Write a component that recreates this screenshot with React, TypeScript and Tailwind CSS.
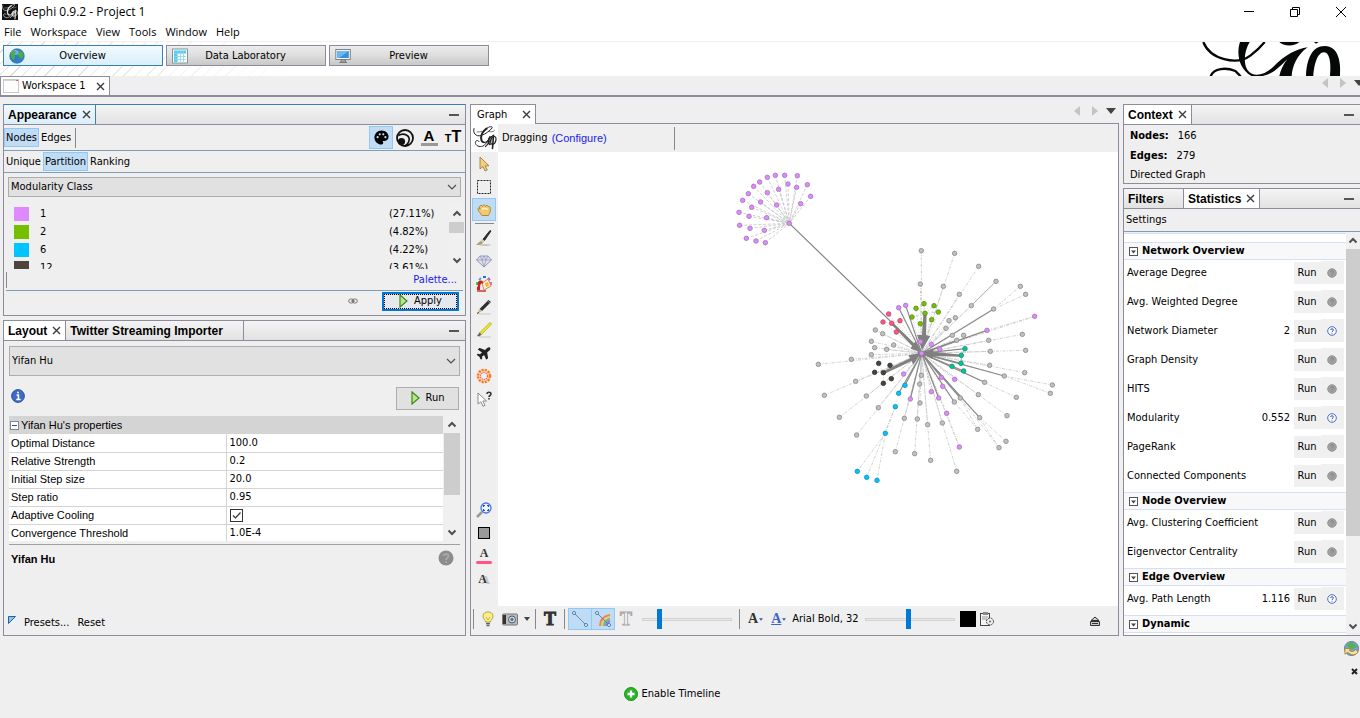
import React from "react";
import { FaPlane } from "react-icons/fa";
import { MdPalette } from "react-icons/md";

type Point = [number, number];

const UI = "font-['DejaVu_Sans_Condensed','DejaVu_Sans','Noto_Sans',sans-serif]";
const ARIAL = "font-['Liberation_Sans',sans-serif]";
const SEGOE = "font-['Open_Sans','Noto_Sans',sans-serif]";

/* ---------- graph data ---------- */

const hub: Point = [365, 340];

const smallCluster: Point[] = [
  [142, 52], [166, 46], [194, 46], [232, 47], [262, 74], [272, 109], [242, 131],
  [204, 72], [230, 82], [176, 88], [142, 98], [119, 66], [101, 79], [85, 101],
  [68, 121], [95, 142], [122, 126], [170, 135], [140, 173], [57, 157], [87, 169],
  [59, 196], [90, 205], [133, 211], [79, 235], [108, 243], [136, 248],
];

const grays: Point[] = [
  [364, 32], [464, 40], [536, 79], [588, 124], [661, 139], [677, 163], [361, 132],
  [430, 139], [478, 163], [514, 197], [581, 207], [466, 233], [447, 242], [438, 265],
  [491, 286], [457, 286], [470, 301], [566, 301], [667, 283], [677, 331], [571, 334],
  [569, 376], [674, 398], [613, 408], [757, 435], [751, 460], [554, 427], [535, 464],
  [649, 472], [621, 527], [481, 474], [463, 486], [539, 533], [533, 568], [618, 604],
  [597, 623], [427, 549], [470, 694], [383, 554], [392, 661], [352, 537], [344, 641],
  [313, 535], [286, 635], [235, 503], [170, 585], [199, 468], [118, 532], [167, 424],
  [73, 466], [154, 358], [55, 373], [214, 344], [214, 304], [224, 323], [226, 270],
  [248, 281], [260, 328], [281, 315], [364, 406], [359, 432], [360, 489],
];

const purples: Point[] = [
  [296, 203], [317, 196], [361, 305], [394, 313], [419, 327], [561, 271], [704, 229],
  [311, 402], [424, 412], [464, 418], [428, 439], [394, 455], [416, 474], [331, 477],
  [440, 520], [478, 621], [365, 340],
];
const greens: Point[] = [
  [372, 191], [402, 197], [348, 205], [415, 216], [375, 220], [336, 231], [395, 239], [361, 251],
];
const pinks: Point[] = [[266, 222], [249, 246], [300, 242], [275, 250], [289, 276]];
const darks: Point[] = [[236, 370], [270, 376], [224, 397], [250, 398], [274, 416], [250, 430]];
const blues: Point[] = [
  [315, 436], [296, 460], [286, 500], [256, 580], [172, 694], [200, 712], [231, 721],
];
const teals: Point[] = [[495, 326], [484, 346], [483, 370], [456, 379], [491, 393]];

const strong: Point[] = [
  [581, 207], [561, 271], [495, 326], [484, 346], [483, 370], [613, 408], [554, 427],
  [481, 474], [539, 533], [463, 486], [416, 474], [331, 477], [296, 460], [315, 436],
  [296, 203], [317, 196], [491, 393], [424, 412], [470, 301],
];

const branches: [Point, Point][] = [
  [[581, 207], [661, 139]], [[581, 207], [677, 163]], [[561, 271], [704, 229]],
  [[613, 408], [757, 435]], [[613, 408], [751, 460]], [[481, 474], [533, 568]],
  [[463, 486], [533, 568]], [[539, 533], [618, 604]], [[539, 533], [597, 623]],
  [[481, 474], [597, 623]], [[256, 580], [172, 694]], [[256, 580], [231, 721]],
  [[286, 500], [200, 712]], [[286, 500], [256, 580]], [[440, 520], [478, 621]],
  [[375, 220], [372, 191]], [[375, 220], [402, 197]], [[375, 220], [336, 231]],
  [[375, 220], [348, 205]], [[375, 220], [415, 216]], [[250, 398], [236, 370]],
  [[250, 398], [224, 397]], [[250, 398], [250, 430]], [[250, 398], [270, 376]],
  [[250, 398], [274, 416]], [[275, 250], [266, 222]], [[275, 250], [249, 246]],
  [[275, 250], [300, 242]],
];

// leaves that hang off another node instead of the hub
const skipped = ["661,139", "677,163", "757,435", "751,460", "533,568", "618,604", "597,623"];

const Dots = ({ points, fill, stroke }: { points: Point[]; fill: string; stroke: string }) => (
  <g fill={fill} stroke={stroke} strokeWidth="2.5">
    {points.map(([x, y]) => (
      <circle key={`${x}-${y}`} cx={x} cy={y} r="6.8" />
    ))}
  </g>
);

const GraphCanvas = () => (
  <svg viewBox="0 0 1860 1362" className="h-full w-full" role="img" aria-label="Graph">
    <g transform="translate(666 24)">
      <g stroke="#c6c6c6" strokeWidth="2.5" strokeDasharray="9 5">
        {smallCluster.map(([x, y]) => (
          <line key={`${x}-${y}`} x1={x} y1={y} x2="208" y2="190" />
        ))}
      </g>
      <line x1="208" y1="190" x2="590" y2="560" stroke="#808080" strokeWidth="3.5" />
      <Dots points={[...smallCluster, [208, 190]]} fill="#df89ff" stroke="#a677b8" />
    </g>
    <g transform="translate(906 264)">
      <g stroke="#c8c8c8" strokeWidth="2.5" strokeDasharray="9 4 3 4">
        {[...grays, ...purples]
          .filter((p) => !skipped.includes(p.join(",")))
          .map(([x, y]) => (
            <line key={`${x}-${y}`} x1={x} y1={y} x2={hub[0]} y2={hub[1]} />
          ))}
        {[...greens, ...pinks].map(([x, y]) => (
          <line key={`${x}-${y}`} x1={x} y1={y} x2={hub[0]} y2={hub[1]} strokeDasharray="3 5" />
        ))}
        {branches.map(([a, b]) => (
          <line key={`${a}-${b}`} x1={a[0]} y1={a[1]} x2={b[0]} y2={b[1]} />
        ))}
      </g>
      <path d="M588 124L514 197M484 370V346L495 326" stroke="#b0b0b0" strokeWidth="3" fill="none" />
      <g stroke="#8a8a8a" strokeWidth="3.5">
        {strong.map(([x, y]) => (
          <line key={`${x}-${y}`} x1={x} y1={y} x2={hub[0]} y2={hub[1]} />
        ))}
      </g>
      <g fill="#808080">
        <path d="M370 222H380L378 286L391 288L366 330L351 284L366 285Z" />
        <path d="M249 394L330 355L325 346L362 339L340 374L335 363L251 403Z" />
        <path d="M482 350L400 348L398 357L366 341L400 326L401 335L484 344Z" />
        <path d="M273 252L279 249L341 310L348 304L362 336L332 326L336 317Z" />
        <path d="M352 334L378 334L374 350H356Z" />
      </g>
      <Dots points={grays} fill="#c0c0c0" stroke="#8c8c8c" />
      <Dots points={greens} fill="#74c000" stroke="#5a9010" />
      <Dots points={pinks} fill="#ff5584" stroke="#bd4768" />
      <Dots points={darks} fill="#4a423c" stroke="#38322e" />
      <Dots points={blues} fill="#00c4ff" stroke="#1192ba" />
      <Dots points={teals} fill="#00c795" stroke="#119273" />
      <Dots points={purples} fill="#df89ff" stroke="#a677b8" />
    </g>
  </svg>
);

/* ---------- icons ---------- */

const Icon = ({
  children,
  box = "0 0 16 16",
  className = "h-4 w-4",
}: {
  children: React.ReactNode;
  box?: string;
  className?: string;
}) => (
  <svg viewBox={box} className={`shrink-0 ${className}`} fill="none" aria-hidden="true">
    {children}
  </svg>
);

const CloseIcon = () => (
  <Icon box="0 0 9 9" className="h-[9px] w-[9px]">
    <path d="M1 1L8 8M8 1L1 8" stroke="#3c3c3c" strokeWidth="1.4" />
  </Icon>
);

const Chevron = ({ up = false }: { up?: boolean }) => (
  <Icon box="0 0 10 7" className="h-[7px] w-[10px]">
    <path d={up ? "M1.5 5.500L5 2L8.500 5.500" : "M1.5 1.500L5 5L8.500 1.500"} stroke="#505050" strokeWidth="2" />
  </Icon>
);

const GlobeIcon = () => (
  <Icon>
    <circle cx="8" cy="8" r="7.300" fill="#2e7fc4" stroke="#3a6c9c" strokeWidth=".6" />
    <ellipse cx="6" cy="4.500" rx="4" ry="2.500" fill="#8cc8f0" opacity=".7" />
    <path d="M2 5C4 2 6 3 7 4L5 7L6 9L5 12C3 11 1 8 2 5ZM9 2L13 4L14.500 7L13 11L10 9L9 6L11 5Z" fill="#4fae3c" />
  </Icon>
);

const TableIcon = () => (
  <Icon>
    <rect x=".5" y="1" width="15" height="14" fill="#fdfdfd" stroke="#7c9a9c" />
    <path d="M2 2.500H14V5H2ZM2 5H5V14H2Z" fill="#50cdf5" />
    <path d="M2 5.500H14M2 8.500H14M2 11.500H14M5.500 3V14M8.500 3V14M11.500 3V14" stroke="#8ed4ec" strokeWidth=".8" />
  </Icon>
);

const MonitorIcon = () => (
  <Icon>
    <rect x=".8" y="1.500" width="14.500" height="10" fill="#f4f4f4" stroke="#828282" />
    <rect x="2.300" y="3" width="11.500" height="7" fill="#3292dc" />
    <path d="M2.300 3H13.800L4 10H2.300Z" fill="#6cb8f0" />
    <path d="M6 12H10.500V14H6ZM4.500 14.500H12" stroke="#777" fill="#ccc" />
  </Icon>
);

const ScriptLogo = ({ stroke, className }: { stroke: string; className: string }) => (
  <Icon box="0 0 24 24" className={className}>
    <g stroke={stroke} strokeLinecap="round">
      <path d="M1 2.500C-.5 7 3 11 8 9.500C13 8 17 4.500 19 2C20 .5 17.500 .3 15.500 1.300C11 3.500 8 8 8 12C8 15.500 10 17.500 13 16C16 14.500 18 11 20 9.500" strokeWidth="1" />
      <path d="M13.500 2.500C9.500 5.500 8 9 8.200 12.500C8.400 15 9.500 16.300 11 16.300" strokeWidth="1.800" />
      <path d="M20 9.500C15.500 11 14.500 17 11 19.500C8 21.500 3.500 20.500 2.500 17.500C1.800 14.500 5 13.500 6 15.500" strokeWidth="1" />
      <path d="M17 11C14.500 14.500 15 18 17 18.300" strokeWidth="1.800" />
      <path d="M12.500 20.500C15.500 18.500 18.500 10.500 21.500 10.500C24 10.500 23.500 17.500 19.500 18.300C16.500 18.500 18 13 19 11.500" strokeWidth="1.200" />
      <path d="M20.500 9.500L19.500 22.500" strokeWidth="1.600" />
      <path d="M4 6C7 6 12 5.500 14.500 3M16 5.500C18 6.500 20.500 5.500 21.500 4.500" strokeWidth=".6" />
    </g>
  </Icon>
);

const BigLogo = () => (
  <Icon box="276 126 474 102" className="h-[34px] w-[158px]">
    <path d="M280 126C300 178 380 198 422 166Q448 146 464 126M302 229C310 203 350 202 376 213L392 229" stroke="#060808" strokeWidth="7" />
    <path d="M390 126H419C402 155 400 190 412 209C428 234 464 226 490 200C525 165 560 146 593 142C560 165 547 200 545 228H508C512 210 520 193 532 178C505 203 490 222 458 228H424C383 205 380 155 390 126Z" fill="#060808" />
    <path d="M588 228C590 178 605 138 645 138C682 138 694 180 690 228H660C664 190 659 157 642 157C622 157 612 195 610 228Z" fill="#060808" />
    <path d="M508 126C520 140 555 140 568 126ZM612 126L618 131L626 126Z" fill="#060808" />
  </Icon>
);

const PlayIcon = () => (
  <Icon box="0 0 9 14" className="h-[14px] w-[9px]">
    <path d="M1 1L8 7L1 13Z" fill="#b9e68c" stroke="#3a8a1c" strokeWidth="1.200" />
  </Icon>
);

const HelpDot = ({ active = false }: { active?: boolean }) => (
  <Icon box="0 0 10 10" className="h-[10px] w-[10px]">
    <circle cx="5" cy="5" r="4.300" fill={active ? "#fff" : "#a0a0a0"} stroke={active ? "#4a6cc8" : "#989898"} />
    <path d="M3.600 4C3.600 2.300 6.400 2.300 6.400 4C6.400 5 5 4.900 5 6M5 6.800V7.700" stroke={active ? "#3458b8" : "#848484"} strokeWidth="1" />
  </Icon>
);

const ArrowPointer = () => (
  <Icon>
    <path d="M4 1V13L7 10.500L9 15L11.300 14L9.200 9.800H13Z" fill="#f5cf7c" stroke="#a07c3c" strokeWidth=".9" />
  </Icon>
);
const SelectBox = () => (
  <Icon>
    <rect x="1.500" y="1.500" width="13" height="13" stroke="#222" strokeDasharray="2 1" />
  </Icon>
);
const HandIcon = () => (
  <Icon>
    <path d="M2 7.500C1.500 5.500 3.500 5.500 4 7.500L3.500 4.500C4 3 6 3 6.500 4.500C7 2.500 9 2.500 9.500 4.500C10 3 12 3 12.300 4.800C13.500 4 14.700 5 14.300 6.500V9C14 11 13 12 12.500 13.500H6C5 11.500 2.500 10 2 7.500Z" fill="#f3c96f" stroke="#b48732" />
    <path d="M5.500 7.500C7 6.500 10 6.500 12 7.500" stroke="#fff0c0" strokeWidth="1.500" />
  </Icon>
);
const BrushIcon = () => (
  <Icon>
    <ellipse cx="9" cy="15" rx="6" ry=".7" fill="#bbb" />
    <path d="M14 .5L15 1L8.500 10.500L7 9.300Z" fill="#2b2b2b" stroke="#2b2b2b" />
    <path d="M6 9L8.500 11L7 13L4.500 11Z" fill="#c8c8c8" />
    <path d="M5 11L7 13C5 15 3 15 0 15C2 14 2 12 5 11Z" fill="#b5a15e" />
  </Icon>
);
const DiamondIcon = () => (
  <Icon>
    <path d="M4 3H12L15.500 7L8 14L.5 7Z" fill="#dfdfee" stroke="#9898b4" />
    <path d="M.5 7H15.500M4 3L6 7L8 14L10 7L12 3M6 7L8 3L10 7" stroke="#9090b8" strokeWidth=".7" />
  </Icon>
);
const PainterIcon = () => (
  <Icon>
    <path d="M1 9L1 6" stroke="#50c850" strokeWidth="2" />
    <path d="M3 4L5 2" stroke="#40a8e8" strokeWidth="2" />
    <path d="M7 1H10" stroke="#3868e0" strokeWidth="2" />
    <path d="M12 2L14 4" stroke="#9a5ce0" strokeWidth="2" />
    <path d="M15 6V9" stroke="#e868b8" strokeWidth="2" />
    <path d="M6 7L12 3L15 10L8 14Z" fill="#fff2dc" stroke="#d58c4c" />
    <path d="M9 7L12 6L13 10L10 11Z" fill="#f2b52a" />
    <path d="M2 6C5 3 8 5 7 8C5 6 4 9 4 14H1V11C3 11 1 8 2 6Z" fill="#c62424" />
    <path d="M1 15H10" stroke="#d03838" strokeWidth="1.500" />
  </Icon>
);
const PencilIcon = () => (
  <Icon>
    <path d="M3 15H15" stroke="#c8c8c8" />
    <path d="M12.500 1L15 3L6 12L3.500 10Z" fill="#2e2e2e" />
    <path d="M11.500 2L14 4" stroke="#888" />
    <path d="M3.500 10L6 12L1 15Z" fill="#d5b47c" />
    <path d="M1 15L2 13L3 14Z" fill="#111" />
  </Icon>
);
const HighlighterIcon = () => (
  <Icon>
    <path d="M4 15H15" stroke="#c8c8c8" />
    <path d="M14 .5L15.500 2L5.500 12.500L3.500 11Z" fill="#f2ee1c" stroke="#a8a424" strokeWidth=".8" />
    <path d="M3.500 10.500L5.500 12.500L3.500 14.500L1 14Z" fill="#666" />
  </Icon>
);
const SunIcon = () => (
  <Icon>
    <circle cx="8" cy="8" r="6" stroke="#ff7820" strokeWidth="2.600" strokeDasharray="2.200 .94" />
    <circle cx="8" cy="8" r="3.500" stroke="#ff5030" strokeDasharray="1.300 .9" strokeWidth="1.200" />
  </Icon>
);
const CursorHelpIcon = () => (
  <Icon>
    <path d="M2 2V13L4.800 10.800L7 15.300L9 14.300L6.800 10H10.500Z" fill="#fff" stroke="#8a8a8a" />
    <path d="M11 3C11 .6 15 .6 15 3C15 4.500 13 4.500 13 6M13 7V8.500" stroke="#333" strokeWidth="1.600" />
  </Icon>
);
const ZoomIcon = () => (
  <Icon>
    <path d="M1 15L6 10" stroke="#999" strokeWidth="2.500" />
    <circle cx="10" cy="6" r="5" fill="#eef4ff" stroke="#5078dc" strokeWidth="1.300" />
    <path d="M7.500 5V3.500H9M11 3.500H12.500V5M12.500 7V8.500H11M9 8.500H7.500V7" stroke="#2a50c0" strokeWidth="1.200" />
  </Icon>
);
const SquareIcon = () => <span className="h-3 w-3 border border-black bg-[#999]" />;

const upperTools = [
  { name: "Direct selection", icon: <ArrowPointer /> },
  { name: "Rectangle selection", icon: <SelectBox /> },
  { name: "Drag", icon: <HandIcon />, active: true },
];
const lowerTools = [
  { name: "Painter", icon: <BrushIcon /> },
  { name: "Sizer", icon: <DiamondIcon /> },
  { name: "Brush", icon: <PainterIcon /> },
  { name: "Node pencil", icon: <PencilIcon /> },
  { name: "Edge pencil", icon: <HighlighterIcon /> },
  { name: "Shortest path", icon: <FaPlane className="h-[15px] w-[15px] -rotate-40 text-[#222]" /> },
  { name: "Heat map", icon: <SunIcon /> },
  { name: "Edit", icon: <CursorHelpIcon /> },
];
const viewTools = [
  { name: "Center on graph", icon: <ZoomIcon /> },
  { name: "Reset colors", icon: <SquareIcon /> },
  {
    name: "Reset label colors",
    icon: (
      <span className="flex flex-col items-center font-['Liberation_Serif',serif] text-[12px] leading-[11px] font-bold text-[#333]">
        A<i className="mt-[2px] h-[3px] w-4 rounded-sm bg-[#ff5584]" />
      </span>
    ),
  },
  {
    name: "Reset label visible",
    icon: (
      <span className="pr-[3px] font-['Liberation_Serif',serif] text-[12px] font-bold text-[#333] [text-shadow:3px_1px_0_#c4c4c4]">
        A
      </span>
    ),
  },
];

const ToolButton = ({ name, icon, active }: { name: string; icon: React.ReactNode; active?: boolean }) => (
  <button
    aria-label={name}
    className={`flex h-[23px] w-6 items-center justify-center ${
      active ? "border border-[#90c8f6] bg-[#bfdcf4]" : ""
    }`}
  >
    {icon}
  </button>
);

/* ---------- shared pieces ---------- */

const Tab = ({
  label,
  active,
  focused,
  closable = true,
  className = "",
}: {
  label: string;
  active?: boolean;
  focused?: boolean;
  closable?: boolean;
  className?: string;
}) => (
  <div
    className={`flex items-center gap-[5px] border-r px-1 ${
      focused
        ? "border-[#3c7fb1] bg-linear-to-b from-[#f0f8fe] to-[#dceefb]"
        : active
          ? "border-[#8c8c9a] bg-white"
          : "border-[#8c8c9a]"
    } ${className}`}
  >
    <button className="whitespace-nowrap">{label}</button>
    {closable && (
      <button aria-label={`Close ${label}`}>
        <CloseIcon />
      </button>
    )}
  </div>
);

const PanelHeader = ({ children }: { children: React.ReactNode }) => (
  <div
    className={`flex h-5 shrink-0 border-b border-[#8c8c9a] bg-linear-to-b from-[#f4f4f4] to-[#e2e2e2] text-[12px] font-bold ${ARIAL}`}
  >
    {children}
    <button aria-label="Minimize" className="ml-auto flex w-[22px] items-center justify-center">
      <i className="h-[2px] w-[10px] bg-[#555]" />
    </button>
  </div>
);

const Panel = ({ children, className = "" }: { children: React.ReactNode; className?: string }) => (
  <section className={`flex min-h-0 flex-col border border-[#8c8c9a] bg-[#efefef] ${className}`}>{children}</section>
);

const Scrollbar = ({ thumb, className = "" }: { thumb: string; className?: string }) => (
  <div className={`flex shrink-0 flex-col items-center bg-[#f0f0f0] ${className}`} aria-hidden="true">
    <div className="flex h-[17px] items-center">
      <Chevron up />
    </div>
    <div className={`w-full bg-[#cdcdcd] ${thumb}`} />
    <div className="mt-auto flex h-[17px] items-center">
      <Chevron />
    </div>
  </div>
);

const Combo = ({ label, value, className }: { label: string; value: string; className: string }) => (
  <div className={`relative shrink-0 ${className}`}>
    <select aria-label={label} className="h-full w-full appearance-none border border-[#adadad] bg-[#e1e1e1] px-[2px]">
      <option>{value}</option>
    </select>
    <span className="pointer-events-none absolute inset-y-0 right-1 flex items-center">
      <Icon box="0 0 10 6" className="h-[6px] w-[10px]">
        <path d="M1 1L5 5L9 1" stroke="#505050" strokeWidth="1.200" />
      </Icon>
    </span>
  </div>
);

/* ---------- top ---------- */

const TitleBar = () => (
  <header className={`shrink-0 bg-white text-[11px] ${SEGOE}`}>
    <div className="flex h-[23px] items-center pl-[2px]">
      <span className="flex h-4 w-4 items-center justify-center bg-[#111]">
        <ScriptLogo stroke="#ddd" className="h-4 w-4" />
      </span>
      <h1 className="ml-[5px] text-[12px]">Gephi 0.9.2 - Project 1</h1>
      <div className="-mr-1 ml-auto flex">
        <button aria-label="Minimize window" className="flex h-5 w-[46px] items-center justify-center">
          <i className="h-px w-[10px] bg-black" />
        </button>
        <button aria-label="Restore window" className="flex h-5 w-[46px] items-center justify-center">
          <Icon box="0 0 10 10" className="h-[10px] w-[10px]">
            <path d="M.5 2.500H7.500V9.500H.5ZM2.500 2V.5H9.500V7.500H8" stroke="#000" />
          </Icon>
        </button>
        <button aria-label="Close window" className="flex h-5 w-[46px] items-center justify-center">
          <Icon box="0 0 10 10" className="h-[10px] w-[10px]">
            <path d="M0 0L10 10M10 0L0 10" stroke="#000" />
          </Icon>
        </button>
      </div>
    </div>
    <nav className="flex h-[19px] items-center gap-[9px] border-b border-[#f0f0f0] pl-1">
      {["File", "Workspace", "View", "Tools", "Window", "Help"].map((item) => (
        <button key={item}>{item}</button>
      ))}
    </nav>
  </header>
);

const perspectives = [
  { name: "Overview", icon: <GlobeIcon />, active: true },
  { name: "Data Laboratory", icon: <TableIcon /> },
  { name: "Preview", icon: <MonitorIcon /> },
];

const Perspectives = () => (
  <div className="flex h-[34px] shrink-0 justify-between bg-white bg-[linear-gradient(90deg,transparent,#fff_300px),repeating-linear-gradient(135deg,#fff_0,#fff_7px,#dcdcdc_7px,#dcdcdc_8px)]">
    <div className="flex items-start gap-[3px] pt-[3px] pl-[3px]">
      {perspectives.map((p) => (
        <button
          key={p.name}
          className={`flex h-[21px] w-40 items-center border pr-[22px] pl-[5px] ${
            p.active
              ? "border-[#3c7fb1] bg-linear-to-b from-[#f2fafe] to-[#d8effb]"
              : "border-[#8c8c9a] bg-linear-to-b from-[#ececec] via-[#dedede] via-50% to-[#c8c8c8]"
          }`}
        >
          {p.icon}
          <span className="flex-1">{p.name}</span>
        </button>
      ))}
    </div>
    <BigLogo />
  </div>
);

const TabArrows = ({ className = "" }: { className?: string }) => (
  <div className={`flex items-center gap-3 ${className}`}>
    <Icon box="0 0 6 10" className="h-[10px] w-[6px]">
      <path d="M6 0V10L0 5Z" fill="#c4c4c4" />
    </Icon>
    <Icon box="0 0 6 10" className="h-[10px] w-[6px]">
      <path d="M0 0V10L6 5Z" fill="#c4c4c4" />
    </Icon>
    <Icon box="0 0 10 6" className="-ml-1 h-[6px] w-[10px]">
      <path d="M0 0H10L5 6Z" fill="#444" />
    </Icon>
  </div>
);

const WorkspaceTabs = () => (
  <div className="flex h-[21px] shrink-0 items-stretch justify-between overflow-hidden border-b-2 border-[#8c8c9a]">
    <div className="flex w-[110px] items-center border border-b-0 border-[#8c8c9a] bg-white pl-[2px]">
      <Icon>
        <rect x=".5" y="1.500" width="15" height="13" fill="#fdfdfd" stroke="#c8c8c8" />
        <path d="M1 2.500H15" stroke="#d4d4d4" />
        <path d="M13 2.500H15" stroke="#e06040" />
      </Icon>
      <button className="ml-[3px]">Workspace 1</button>
      <button aria-label="Close Workspace 1" className="mr-1 ml-auto">
        <CloseIcon />
      </button>
    </div>
    <TabArrows className="-mr-1 pb-[5px]" />
  </div>
);

/* ---------- left ---------- */

const classes = [
  { id: "1", share: "(27.11%)", swatch: "bg-[#df89ff]" },
  { id: "2", share: "(4.82%)", swatch: "bg-[#74c000]" },
  { id: "6", share: "(4.22%)", swatch: "bg-[#00c4ff]" },
  { id: "12", share: "(3.61%)", swatch: "bg-[#4c463e]" },
];

const pressed = "border border-[#90c8f6] bg-[#bfdcf4]";

const Appearance = () => (
  <Panel className="h-[212px] shrink-0 border-t-[#3c7fb1]">
    <PanelHeader>
      <Tab label="Appearance" focused />
    </PanelHeader>
    <div className="flex h-[26px] shrink-0 items-center border-b border-[#7e9db9]">
      <button className={`h-[19px] px-px ${pressed}`}>Nodes</button>
      <button className="h-[19px] px-[2px]">Edges</button>
      <i className="ml-[2px] h-5 w-px bg-[#888]" />
      <div className="ml-auto flex">
        <button aria-label="Color" className={`flex h-[23px] w-6 items-center justify-center ${pressed}`}>
          <MdPalette className="h-[17px] w-[17px]" />
        </button>
        <button aria-label="Size" className="flex h-[23px] w-6 items-center justify-center">
          <Icon box="0 0 18 18" className="h-[18px] w-[18px]">
            <circle cx="9" cy="9" r="8" stroke="#111" strokeWidth="1.800" />
            <path d="M2.500 6.500C8 3 14.500 7 13 12C12.500 14 11 16 9 17" stroke="#111" strokeWidth="1.600" />
            <circle cx="5.500" cy="12.500" r="3.600" fill="#111" />
          </Icon>
        </button>
        <button
          aria-label="Label color"
          className={`flex h-[23px] w-6 flex-col items-center justify-center text-[15px] leading-[13px] font-bold ${ARIAL}`}
        >
          A<i className="mt-px h-[3px] w-[17px] bg-[#999]" />
        </button>
        <button aria-label="Label size" className={`h-[23px] w-6 text-[16px] font-bold ${ARIAL}`}>
          <span className="text-[11px]">T</span>T
        </button>
      </div>
    </div>
    <div className="flex h-[22px] shrink-0 items-center border-b border-[#7e9db9]">
      <button className="h-[19px] px-[2px]">Unique</button>
      <button className={`h-[19px] px-px ${pressed}`}>Partition</button>
      <button className="h-[19px] px-[2px]">Ranking</button>
    </div>
    <Combo label="Attribute" value="Modularity Class" className="mx-1 mt-1 h-5" />
    <div className="mt-2 flex h-[64px] shrink-0">
      <ul className="flex-1 overflow-hidden pl-[10px]">
        {classes.map((c) => (
          <li key={c.id} className="flex h-[18px] items-center">
            <span className={`h-[14px] w-[15px] ${c.swatch}`} />
            <span className="ml-[11px] flex-1">{c.id}</span>
            <span className="w-[60px]">{c.share}</span>
          </li>
        ))}
      </ul>
      <Scrollbar className="mr-px w-[15px]" thumb="h-[11px]" />
    </div>
    <div className="mx-[2px] flex flex-1 items-center justify-between border-b border-[#7e9db9]">
      <i className="h-4 w-px bg-[#888]" />
      <a href="#palette" className="pr-[6px] text-[#2020ee]">
        Palette...
      </a>
    </div>
    <div className="flex h-6 shrink-0 items-center justify-end pr-[6px] pb-1">
      <Icon box="0 0 10 6" className="mr-6 h-[6px] w-[10px]">
        <rect x=".7" y="1" width="5" height="4" rx="2" stroke="#777" />
        <rect x="4.300" y="1" width="5" height="4" rx="2" stroke="#777" />
        <path d="M3 3H7" stroke="#777" />
      </Icon>
      <button className="h-[19px] w-[77px] border-2 border-[#0078d7] bg-[#e5e9ee]">
        <span className="flex h-full items-center justify-center gap-[6px] border border-dotted border-black">
          <PlayIcon />
          Apply
        </span>
      </button>
    </div>
  </Panel>
);

const properties = [
  { name: "Optimal Distance", value: "100.0" },
  { name: "Relative Strength", value: "0.2" },
  { name: "Initial Step size", value: "20.0" },
  { name: "Step ratio", value: "0.95" },
  { name: "Adaptive Cooling", value: true },
  { name: "Convergence Threshold", value: "1.0E-4" },
];

const LayoutPanel = () => (
  <Panel className="flex-1">
    <PanelHeader>
      <Tab label="Layout" active />
      <Tab label="Twitter Streaming Importer" closable={false} className="w-[178px]" />
    </PanelHeader>
    <Combo label="Layout algorithm" value="Yifan Hu" className="mx-[5px] mt-[5px] h-[30px]" />
    <div className="flex h-10 shrink-0 items-center justify-between px-[6px]">
      <Icon className="ml-px h-[14px] w-[14px]">
        <circle cx="8" cy="8" r="7.300" fill="#3c6cc8" stroke="#24448c" />
        <path d="M6.500 7H8.500V12M6 12H11M7 4H9" stroke="#fff" strokeWidth="1.800" />
      </Icon>
      <button className="mt-1 flex h-[23px] w-[63px] items-center justify-center gap-[6px] border border-[#adadad] bg-[#e1e1e1]">
        <PlayIcon />
        Run
      </button>
    </div>
    <div className="mx-[5px] flex h-[125px] shrink-0 overflow-hidden">
      <table className={`w-full flex-1 border-collapse bg-white text-left ${ARIAL}`}>
        <thead>
          <tr className="h-[18px] bg-[#d4d4d4]">
            <th colSpan={2} className="p-0 font-normal">
              <span className="flex items-center gap-[2px] pl-px">
                <Icon box="0 0 9 9" className="h-[9px] w-[9px]">
                  <rect x=".5" y=".5" width="8" height="8" fill="#fff" stroke="#808898" />
                  <path d="M2 4.500H7" stroke="#2c4c8c" />
                </Icon>
                Yifan Hu's properties
              </span>
            </th>
          </tr>
        </thead>
        <tbody>
          {properties.map((p) => (
            <tr key={p.name} className="h-[18px] border-b border-[#d4d4d4]">
              <td className="w-1/2 border-r border-[#d4d4d4] py-0 pl-[2px]">{p.name}</td>
              <td className={`py-0 pl-[3px] ${UI}`}>
                {p.value === true ? (
                  <span className="relative block h-[13px] w-[13px]">
                    <input
                      type="checkbox"
                      defaultChecked
                      aria-label={p.name}
                      className="block h-[13px] w-[13px] appearance-none border border-[#333] bg-white"
                    />
                    <Icon box="0 0 13 13" className="pointer-events-none absolute inset-0 h-[13px] w-[13px]">
                      <path d="M3 6.500L5.500 9L10.500 3.500" stroke="#333" strokeWidth="1.200" />
                    </Icon>
                  </span>
                ) : (
                  p.value
                )}
              </td>
            </tr>
          ))}
        </tbody>
      </table>
      <Scrollbar className="ml-px w-4" thumb="h-[62px]" />
    </div>
    <div className="mx-[5px] mt-[3px] flex justify-between border-t border-[#a0a0a0] px-[2px] pt-[5px]">
      <h2 className={`pt-[2px] font-bold ${ARIAL}`}>Yifan Hu</h2>
      <Icon className="mr-1 h-4 w-4">
        <circle cx="8" cy="8" r="7.500" fill="#8c8c8c" />
        <path d="M5.500 6C5.500 3.300 10.500 3.300 10.500 6C10.500 8 8 8 8 10M8 11V13" stroke="#a8a8a8" strokeWidth="1.800" />
      </Icon>
    </div>
    <div className="mt-auto flex gap-2 pb-[5px] pl-1">
      <Icon box="0 0 8 8" className="h-2 w-2">
        <path d="M.5 .5H7.500L.5 7.500Z" fill="#8cc4ec" stroke="#1c64a4" />
      </Icon>
      <button>Presets...</button>
      <button>Reset</button>
    </div>
  </Panel>
);

/* ---------- center ---------- */

const Separator = ({ className = "" }: { className?: string }) => (
  <i className={`h-5 w-px shrink-0 bg-[#888] ${className}`} />
);

const Slider = ({ label, value }: { label: string; value: number }) => (
  <input
    type="range"
    aria-label={label}
    defaultValue={value}
    className="h-5 w-[90px] appearance-none bg-transparent [&::-webkit-slider-runnable-track]:h-[3px] [&::-webkit-slider-runnable-track]:border [&::-webkit-slider-runnable-track]:border-[#d0d3d3] [&::-webkit-slider-runnable-track]:bg-[#e7eaea] [&::-webkit-slider-thumb]:mt-[-10px] [&::-webkit-slider-thumb]:h-5 [&::-webkit-slider-thumb]:w-[5px] [&::-webkit-slider-thumb]:appearance-none [&::-webkit-slider-thumb]:bg-[#0078d7]"
  />
);

const serif = "font-['Liberation_Serif',serif] font-bold";

const GraphToolbar = () => (
  <div className="flex h-[29px] shrink-0 items-center bg-[#efefef] pb-[3px] pl-[2px]">
    <Separator />
    <button aria-label="Background" className="ml-[6px]">
      <Icon>
        <path d="M5.500 11C5.500 9 3 8 3 5C3 -.5 13 -.5 13 5C13 8 10.500 9 10.500 11Z" fill="#f8ee88" stroke="#b8a648" />
        <path d="M6 12.500H10M6.500 14.500H9.500" stroke="#666" strokeWidth="1.500" />
        <path d="M6 6L8 9L10 6" stroke="#c8a838" strokeWidth=".8" />
      </Icon>
    </button>
    <button aria-label="Screenshot" className="ml-[6px] flex items-center gap-[6px]">
      <Icon>
        <rect x=".5" y="3" width="15" height="11" rx="1" fill="#bcbcbc" stroke="#777" />
        <path d="M1 4H4V13H1Z" fill="#333" />
        <circle cx="10" cy="8.500" r="3.500" fill="#d8e0ec" stroke="#555" />
        <circle cx="10" cy="8.500" r="1.700" fill="#4878a8" />
      </Icon>
      <Icon box="0 0 6 4" className="h-1 w-[6px]">
        <path d="M0 0H6L3 4Z" fill="#444" />
      </Icon>
    </button>
    <Separator className="ml-[5px]" />
    <button aria-label="Show node labels" className={`w-7 text-[18px] leading-5 text-[#333] ${serif} [-webkit-text-stroke:1px_#333]`}>
      T
    </button>
    <Separator className="mr-[3px]" />
    <button aria-label="Show edges" className={`flex h-[22px] w-6 items-center justify-center ${pressed}`}>
      <Icon>
        <path d="M2 2L14 14" stroke="#5a8cc0" />
        <circle cx="2" cy="2" r="1.500" fill="#fff" stroke="#4878b0" />
        <circle cx="14" cy="14" r="1.500" fill="#fff" stroke="#4878b0" />
      </Icon>
    </button>
    <button aria-label="Edge color" className={`-ml-px flex h-[22px] w-6 items-center justify-center ${pressed}`}>
      <Icon>
        <path d="M5 15C5 8 9 5 15 4" stroke="#f08060" strokeWidth="2" />
        <path d="M7 15C7 10 10 7 15 6" stroke="#e8d060" strokeWidth="2" />
        <path d="M9 15C9 11 11 9 15 8" stroke="#60c080" strokeWidth="2" />
        <path d="M11 15C11 13 13 11 15 10" stroke="#9878d8" strokeWidth="2" />
        <path d="M2 2L14 14" stroke="#5a8cc0" />
        <circle cx="2" cy="2" r="1.500" fill="#fff" stroke="#4878b0" />
        <circle cx="14" cy="14" r="1.500" fill="#fff" stroke="#4878b0" />
      </Icon>
    </button>
    <button aria-label="Show edge labels" className={`w-[22px] text-[18px] leading-5 text-white ${serif} [-webkit-text-stroke:1px_#aaa]`}>
      T
    </button>
    <span className="ml-[5px] flex">
      <Slider label="Edge weight" value={17} />
    </span>
    <Separator className="ml-[7px]" />
    <button aria-label="Label size mode" className={`ml-[8px] flex items-center text-[14px] leading-5 text-[#333] ${serif}`}>
      A
      <Icon box="0 0 6 4" className="ml-px h-[3px] w-1">
        <path d="M0 0H6L3 4Z" fill="#3858a8" />
      </Icon>
    </button>
    <button aria-label="Label color mode" className={`ml-[8px] flex items-center text-[14px] leading-5 text-[#4064c8] ${serif}`}>
      <span className="underline">A</span>
      <Icon box="0 0 6 4" className="ml-px h-[3px] w-1">
        <path d="M0 0H6L3 4Z" fill="#3858a8" />
      </Icon>
    </button>
    <button className="ml-[6px] whitespace-nowrap">Arial Bold, 32</button>
    <span className="ml-[6px] flex">
      <Slider label="Label size" value={49} />
    </span>
    <button aria-label="Label default color" className="ml-[5px] h-4 w-4 bg-black" />
    <button aria-label="Label attributes" className="ml-[3px]">
      <Icon>
        <rect x="1.500" y="2.500" width="9" height="12" fill="#f4f4f4" stroke="#444" />
        <rect x="4" y="1" width="5" height="3" fill="#888" />
        <path d="M3 6H9M3 8H8" stroke="#999" />
        <circle cx="11" cy="10.500" r="3.500" fill="#eee" stroke="#444" strokeDasharray="2 .8" />
        <circle cx="11" cy="10.500" r="1" fill="#666" />
      </Icon>
    </button>
    <button aria-label="Expand settings" className="mr-[18px] ml-auto pt-1">
      <Icon box="0 0 10 10" className="h-[10px] w-[10px]">
        <path d="M1 4.500L5 1L9 4.500ZM.5 5.500H9.500V9.500H.5ZM2 7.500H8" stroke="#333" fill="#ccc" />
      </Icon>
    </button>
  </div>
);

const GraphPanel = () => (
  <main className="flex min-w-0 flex-1 flex-col">
    <div className="flex h-5 shrink-0 justify-between">
      <div className="flex w-[66px] items-center justify-between border border-b-0 border-[#8c8c9a] bg-white pr-1 pl-[6px]">
        <button>Graph</button>
        <button aria-label="Close Graph">
          <CloseIcon />
        </button>
      </div>
      <div className="flex flex-1 justify-end border-b border-[#8c8c9a]">
        <TabArrows className="mr-[3px] pb-[6px]" />
      </div>
    </div>
    <div className="flex min-h-0 flex-1 flex-col border border-t-0 border-[#8c8c9a] bg-white">
      <div className="flex h-7 shrink-0 items-center bg-[#efefef]">
        <span className="flex h-7 w-[27px] items-center justify-center bg-white">
          <ScriptLogo stroke="#222" className="h-6 w-6" />
        </span>
        <span className="ml-1">Dragging</span>
        <a href="#configure" className={`ml-1 text-[#2020ee] ${ARIAL}`}>
          (Configure)
        </a>
        <i className="ml-[67px] h-[23px] w-px bg-[#888]" />
      </div>
      <div className="flex min-h-0 flex-1">
        <div className="flex w-[27px] shrink-0 flex-col items-start bg-[#efefef] pl-px">
          {upperTools.map((t) => (
            <ToolButton key={t.name} {...t} />
          ))}
          <i className="my-[2px] ml-[3px] h-px w-[19px] bg-[#888]" />
          {lowerTools.map((t) => (
            <ToolButton key={t.name} {...t} />
          ))}
          <div className="mt-auto pb-4">
            {viewTools.map((t) => (
              <ToolButton key={t.name} {...t} />
            ))}
          </div>
        </div>
        <div className="min-w-0 flex-1 bg-white">
          <GraphCanvas />
        </div>
      </div>
      <GraphToolbar />
    </div>
  </main>
);

/* ---------- right ---------- */

const sections = [
  {
    title: "Network Overview",
    rows: [
      { name: "Average Degree" },
      { name: "Avg. Weighted Degree" },
      { name: "Network Diameter", value: "2" },
      { name: "Graph Density" },
      { name: "HITS" },
      { name: "Modularity", value: "0.552" },
      { name: "PageRank" },
      { name: "Connected Components" },
    ],
  },
  { title: "Node Overview", rows: [{ name: "Avg. Clustering Coefficient" }, { name: "Eigenvector Centrality" }] },
  { title: "Edge Overview", rows: [{ name: "Avg. Path Length", value: "1.116" }] },
  { title: "Dynamic", rows: [] },
] as { title: string; rows: { name: string; value?: string }[] }[];

const Statistics = () => (
  <Panel className="flex-1 border-r-0">
    <PanelHeader>
      <Tab label="Filters" closable={false} className="w-[60px]" />
      <Tab label="Statistics" active />
    </PanelHeader>
    <div className="flex h-[23px] shrink-0 items-center border-b border-[#7e9db9] pl-[2px]">
      <button>Settings</button>
    </div>
    <div className="flex min-h-0 flex-1">
      <div className="mt-px min-w-0 flex-1 overflow-hidden border-t border-[#d5dff5] bg-white pt-[8px]">
        {sections.map((s) => (
          <section key={s.title}>
            <h2 className="flex h-[18px] items-center border-y border-[#d5dff5] bg-[#f8f8f8] pl-[5px] font-bold">
              <button aria-label={`Collapse ${s.title}`} className="mr-1">
                <Icon box="0 0 9 9" className="h-[9px] w-[9px]">
                  <rect x=".5" y=".5" width="8" height="8" fill="#fff" stroke="#555" />
                  <path d="M2 3.500H7L4.500 6.500Z" fill="#444" />
                </Icon>
              </button>
              {s.title}
            </h2>
            {s.rows.map((r) => (
              <div key={r.name} className="flex h-[29px] items-center pt-px pr-[2px] pb-[5px] pl-[3px]">
                <span className="flex-1 whitespace-nowrap">{r.name}</span>
                <span className="pr-1">{r.value}</span>
                <button className="h-[22px] w-[27px] bg-[#f0f0f0] pr-px">Run</button>
                <button
                  aria-label={`${r.name} report`}
                  className="flex h-[23px] w-[23px] items-center justify-center bg-[#f0f0f0] pr-[2px]"
                >
                  <HelpDot active={!!r.value} />
                </button>
              </div>
            ))}
          </section>
        ))}
      </div>
      <Scrollbar className="w-[14px]" thumb="h-[287px]" />
    </div>
  </Panel>
);

const Context = () => (
  <Panel className="h-[80px] shrink-0 border-r-0">
    <PanelHeader>
      <Tab label="Context" active />
    </PanelHeader>
    <dl className="flex flex-col px-[6px] pt-px leading-5">
      <div className="flex gap-[9px]">
        <dt className="font-bold">Nodes:</dt>
        <dd>166</dd>
      </div>
      <div className="flex gap-[9px]">
        <dt className="font-bold">Edges:</dt>
        <dd>279</dd>
      </div>
      <div className="-mt-px">Directed Graph</div>
    </dl>
  </Panel>
);

const BottomBar = () => (
  <footer className="relative flex h-[82px] shrink-0 items-end justify-center">
    <button className="mr-4 mb-[17px] flex items-center gap-1">
      <Icon className="h-[14px] w-[14px]">
        <circle cx="8" cy="8" r="7.500" fill="#28b428" stroke="#189018" />
        <path d="M8 4V12M4 8H12" stroke="#fff" strokeWidth="2.600" />
      </Icon>
      Enable Timeline
    </button>
    <div className="absolute top-[5px] right-px flex flex-col items-end gap-3">
      <button aria-label="Updates">
        <Icon className="h-[15px] w-[15px]">
          <circle cx="8" cy="8" r="7.500" fill="#70a8d0" stroke="#607890" />
          <path d="M3 4L8 1L14 6L9 9L5 7Z" fill="#58b050" />
          <path d="M1 8L7 8L5.500 10C8 12 11 11 13 9L15 12C11 16 7 15 4 12L1 14Z" fill="#f4e2a8" stroke="#b08830" />
        </Icon>
      </button>
      <button aria-label="Close timeline" className="pr-px">
        <Icon box="0 0 7 7" className="h-[7px] w-[7px]">
          <path d="M1 1L6 6M6 1L1 6" stroke="#222" strokeWidth="2" />
        </Icon>
      </button>
    </div>
  </footer>
);

const App: React.FC = () => {
  return (
    <div className={`flex h-screen flex-col overflow-hidden bg-[#efefef] text-[11px] leading-[14px] text-black ${UI}`}>
      <TitleBar />
      <Perspectives />
      <WorkspaceTabs />
      <div className="flex min-h-0 flex-1 gap-1 pt-[7px] pl-[3px]">
        <div className="flex w-[463px] shrink-0 flex-col gap-1">
          <Appearance />
          <LayoutPanel />
        </div>
        <GraphPanel />
        <aside className="flex w-[237px] shrink-0 flex-col gap-1">
          <Context />
          <Statistics />
        </aside>
      </div>
      <BottomBar />
    </div>
  );
};

export default App;
